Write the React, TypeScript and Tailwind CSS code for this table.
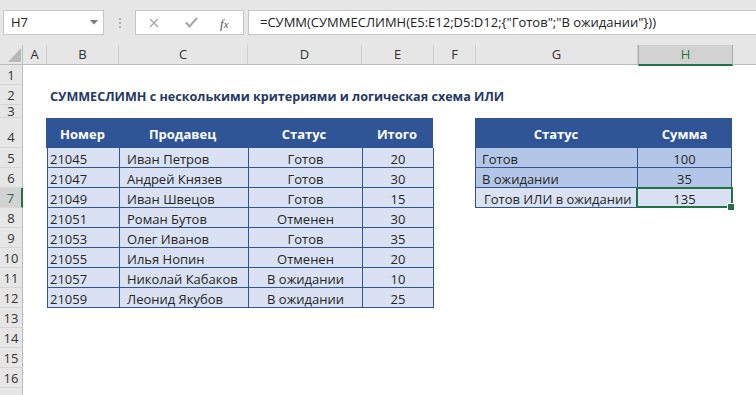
import React from "react";

const W = { A: "w-[24px]", B: "w-[72px]", C: "w-[129px]", D: "w-[114px]", E: "w-[72px]", F: "w-[42px]", G: "w-[162px]", H: "w-[95px]" };

const rowHeights: Record<number, string> = {
  1: "h-[20px]", 2: "h-[20px]", 3: "h-[13px]", 4: "h-[30px]",
};

const data = [
  ["21045", "Иван Петров", "Готов", "20"],
  ["21047", "Андрей Князев", "Готов", "30"],
  ["21049", "Иван Швецов", "Готов", "15"],
  ["21051", "Роман Бутов", "Отменен", "30"],
  ["21053", "Олег Иванов", "Готов", "35"],
  ["21055", "Илья Нопин", "Отменен", "20"],
  ["21057", "Николай Кабаков", "В ожидании", "10"],
  ["21059", "Леонид Якубов", "В ожидании", "25"],
];

const summary = [
  ["Готов", "100", "bg-[#b4c6e7]"],
  ["В ожидании", "35", "bg-[#b4c6e7]"],
  ["Готов ИЛИ в ожидании", "135", "bg-[#d9e1f2]"],
];

function RowHeader({ n, h }: { n: number; h: string }) {
  const sel = n === 7;
  const label = n < 17 ? <span className={n === 4 ? "pt-[10px]" : n === 3 ? "" : "pt-[1px]"}>{n}</span> : null;
  return (
    <div
      className={`${h} w-[23px] shrink-0 flex items-center justify-center border-b border-[#d5d5d5] text-[13px] ${
        n === 3 ? "leading-[12px]" : "leading-[13px]"
      } ${
        sel ? "bg-[#d2d2d2] text-[#217346] border-r-2 border-r-[#217346]" : "bg-[#e6e6e6] text-[#333] border-r border-r-[#bcbcbc]"
      }`}
    >
      {label}
    </div>
  );
}

function Row({ n, children }: { n: number; children?: React.ReactNode }) {
  const h = rowHeights[n] ?? "h-[20px]";
  return (
    <div className={`flex ${h}`}>
      <RowHeader n={n} h={h} />
      {children}
    </div>
  );
}

const bodyCell = "h-full border-l border-b border-[#2f5597] bg-[#d9e1f2] text-[13px] text-[#262626] flex items-end pb-[1px] leading-none";

export default function App() {
  return (
    <div className="w-[756px] h-[395px] overflow-hidden bg-white font-['Open_Sans',sans-serif] select-none">
      {/* Formula bar */}
      <div className="h-[45px] bg-[#e6e6e6] flex items-start pt-[10px] pl-[3px]">
        <div className="w-[101px] h-[25px] bg-white border border-[#c6c6c6] flex items-center justify-between pl-[7px] pr-[5px]">
          <span className="text-[13px] text-[#222]">H7</span>
          <svg width="8" height="5" viewBox="0 0 8 5"><path d="M0 0 H8 L4 4.5 Z" fill="#7a7a7a" /></svg>
        </div>
        <div className="w-[31px] h-[25px] flex flex-col items-center justify-center gap-[2px]">
          <div className="w-[2px] h-[2px] bg-[#b3b3b3]" />
          <div className="w-[2px] h-[2px] bg-[#b3b3b3]" />
          <div className="w-[2px] h-[2px] bg-[#b3b3b3]" />
        </div>
        <div className="w-[109px] h-[25px] bg-white border border-[#c6c6c6] flex items-center relative">
          <svg className="absolute left-[13px] top-[7px]" width="10" height="10" viewBox="0 0 10 10">
            <path d="M1 1 L9 9 M9 1 L1 9" stroke="#a6a6a6" strokeWidth="1.3" />
          </svg>
          <svg className="absolute left-[49px] top-[6px]" width="13" height="11" viewBox="0 0 13 11">
            <path d="M1 5.5 L4.5 9.5 L12 1" stroke="#a6a6a6" strokeWidth="2" fill="none" />
          </svg>
          <span className="absolute left-[84px] top-[3px] text-[13px] italic text-[#555] font-['Liberation_Serif',serif]">
            f<span className="text-[11px]">x</span>
          </span>
        </div>
        <div className="ml-[4px] flex-1 h-[25px] bg-white border-y border-l border-[#c6c6c6] flex items-center pl-[11px]">
          <span className="text-[13px] text-[#222] whitespace-nowrap">
            =СУММ(СУММЕСЛИМН(E5:E12;D5:D12;{"{"}"Готов";"В ожидании"{"}"}))
          </span>
        </div>
      </div>

      {/* Column headers */}
      <div className="flex h-[20px] bg-[#e6e6e6] border-b border-[#bcbcbc] text-[13px] text-[#333]">
        <div className="w-[23px] h-full border-r border-[#bcbcbc] relative">
          <svg className="absolute left-[8px] top-[3px]" width="13" height="14" viewBox="0 0 13 14">
            <path d="M13 0 V14 H0 Z" fill="#b8b8b8" />
          </svg>
        </div>
        <div className={`${W.A} h-full border-r border-[#d0d0d0] flex items-center justify-center`}>A</div>
        <div className={`${W.B} h-full border-r border-[#d0d0d0] flex items-center justify-center`}>B</div>
        <div className={`${W.C} h-full border-r border-[#d0d0d0] flex items-center justify-center`}>C</div>
        <div className={`${W.D} h-full border-r border-[#d0d0d0] flex items-center justify-center`}>D</div>
        <div className={`${W.E} h-full border-r border-[#d0d0d0] flex items-center justify-center`}>E</div>
        <div className={`${W.F} h-full border-r border-[#d0d0d0] flex items-center justify-center`}>F</div>
        <div className={`${W.G} h-full border-r border-[#d0d0d0] flex items-center justify-center`}>G</div>
        <div className={`${W.H} h-[21px] bg-[#d2d2d2] border-x border-[#ababab] border-b-2 border-b-[#217346] flex items-center justify-center text-[#217346]`}>H</div>
        <div className="flex-1 h-full" />
      </div>

      {/* Grid rows */}
      <Row n={1} />
      <Row n={2}>
        <div className="w-[24px]" />
        <div className="flex items-end pb-0 pl-[3px] whitespace-nowrap text-[12.6px] leading-[16px] font-bold text-[#1f3864] pt-[3px]">
          СУММЕСЛИМН с несколькими критериями и логическая схема ИЛИ
        </div>
      </Row>
      <Row n={3} />
      <Row n={4}>
        <div className="w-[23px] shrink-0" />
        <div className="flex h-full bg-[#2f5597] text-white font-bold text-[13px] leading-none border-l border-[#2f5597]">
          <div className="w-[71px] flex items-end justify-center pb-[7px]">Номер</div>
          <div className="w-[129px] flex items-end justify-center pb-[7px]">Продавец</div>
          <div className="w-[114px] flex items-end justify-center pb-[7px]">Статус</div>
          <div className="w-[72px] flex items-end justify-center pb-[7px]">Итого</div>
        </div>
        <div className="w-[42px] shrink-0" />
        <div className="flex h-full bg-[#2f5597] text-white font-bold text-[13px] leading-none">
          <div className="w-[162px] flex items-end justify-center pb-[7px]">Статус</div>
          <div className="w-[95px] flex items-end justify-center pb-[7px]">Сумма</div>
        </div>
      </Row>
      {Array.from({ length: 8 }).map((_, i) => {
        const n = 5 + i;
        const r = data[i];
        const s = summary[i];
        return (
          <Row key={n} n={n}>
            <div className="w-[24px] shrink-0" />
            <div className={`${W.B} ${bodyCell} pl-[2px]`}>{r[0]}</div>
            <div className={`${W.C} ${bodyCell} pl-[7px]`}>{r[1]}</div>
            <div className={`${W.D} ${bodyCell} justify-center`}>{r[2]}</div>
            <div className={`${W.E} ${bodyCell} justify-center border-r`}>{r[3]}</div>
            <div className="w-[41px] shrink-0" />
            {s ? (
              <>
                <div className={`${W.G} h-full border-l border-b border-[#2f5597] ${s[2]} text-[13px] text-[#262626] flex items-end pb-[1px] leading-none ${i === 2 ? "pl-[8px]" : "pl-[6px]"}`}>
                  {s[0]}
                </div>
                <div className={`${W.H} h-full border-l border-r border-b border-[#2f5597] ${s[2]} text-[13px] text-[#262626] flex items-end pb-[1px] justify-center leading-none relative`}>
                  {s[1]}
                  {i === 2 && (
                    <>
                      <div className="absolute left-[-2px] right-[-2px] top-[-1px] bottom-[-1px] border-2 border-[#217346]" />
                      <div className="absolute right-[-4px] bottom-[-4px] w-[6px] h-[6px] bg-[#217346] border border-white box-content" />
                    </>
                  )}
                </div>
              </>
            ) : null}
          </Row>
        );
      })}
      {[13, 14, 15, 16, 17].map((n) => (
        <Row key={n} n={n} />
      ))}
    </div>
  );
}
